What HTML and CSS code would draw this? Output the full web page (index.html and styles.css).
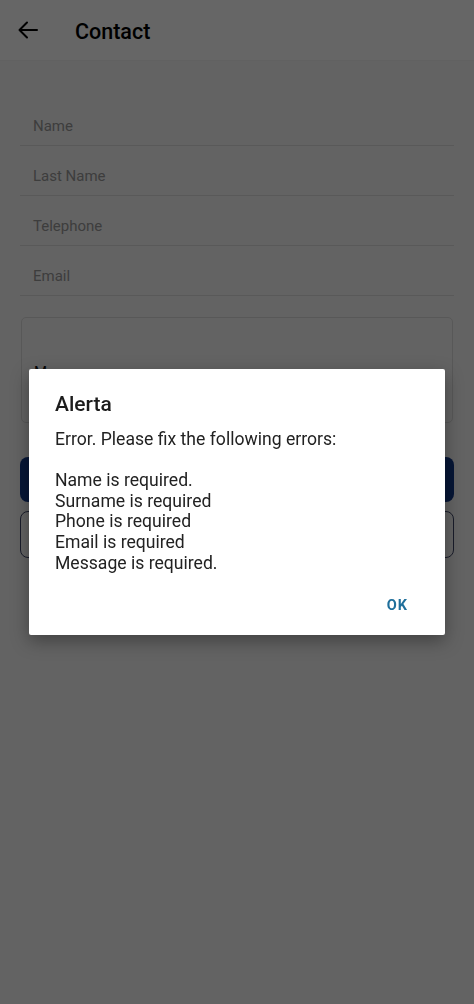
FILE: index.html
```html
<!DOCTYPE html>
<html lang="en">
<head>
<meta charset="utf-8">
<title>Contact</title>
<link rel="stylesheet" href="styles.css">
</head>
<body>
<div class="page">
  <header class="appbar">
    <svg class="back" width="24" height="24" viewBox="0 0 24 24" aria-hidden="true">
      <path d="M21 12H3.5M11 4.5L3.5 12L11 19.5" fill="none" stroke="#000" stroke-width="2" stroke-linecap="round" stroke-linejoin="round"/>
    </svg>
    <h1 class="title">Contact</h1>
  </header>
  <form class="form">
    <div class="field"><span class="label">Name</span></div>
    <div class="field"><span class="label">Last Name</span></div>
    <div class="field"><span class="label">Telephone</span></div>
    <div class="field"><span class="label">Email</span></div>
    <div class="textarea"><span class="label">Message</span></div>
    <div class="btn btn-primary">Send</div>
    <div class="btn btn-outline">Cancel</div>
  </form>
</div>
<div class="overlay"></div>
<div class="dialog" role="alertdialog">
  <h2 class="dialog-title">Alerta</h2>
  <div class="dialog-body">
    <p>Error. Please fix the following errors:</p>
    <p class="blank">&nbsp;</p>
    <p>Name is required.</p>
    <p>Surname is required</p>
    <p>Phone is required</p>
    <p>Email is required</p>
    <p>Message is required.</p>
  </div>
  <div class="dialog-actions"><span class="ok">OK</span></div>
</div>
</body>
</html>
```
FILE: styles.css
```css
* { box-sizing: border-box; }
html, body {
  margin: 0;
  padding: 0;
  height: 100%;
}
body {
  font-family: Roboto, "Liberation Sans", sans-serif;
  background: #f7f7f7;
  color: #212121;
  overflow: hidden;
}
.page {
  min-height: 1004px;
}
.appbar {
  height: 61px;
  background: #ffffff;
  border-bottom: 1px solid #f2f2f2;
  display: flex;
  align-items: center;
  padding-left: 16px;
}
.back {
  display: block;
  width: 24px;
  height: 24px;
}
.title {
  margin: 2px 0 0 35px;
  font-size: 21.5px;
  font-weight: 500;
  color: #000;
}
.form {
  padding: 35px 20px 0 20px;
  display: flex;
  flex-direction: column;
}
.field {
  height: 50px;
  border-bottom: 1px solid #dedede;
  display: flex;
  align-items: flex-end;
  padding: 0 0 10px 13px;
}
.label {
  font-size: 15px;
  line-height: 18px;
  color: #9a9a9a;
}
.textarea {
  margin: 21px 1px 0 1px;
  height: 106px;
  border: 1px solid #dddddd;
  border-radius: 5px;
  padding: 44px 0 0 12px;
}
.textarea .label {
  color: #111;
}
.btn {
  height: 45px;
  border-radius: 8px;
  display: flex;
  align-items: center;
  justify-content: center;
  font-size: 15px;
  font-weight: 500;
}
.btn-primary {
  margin-top: 34px;
  background: #113788;
  color: #fff;
}
.btn-outline {
  margin-top: 9px;
  height: 47px;
  border: 1px solid #40486a;
  color: #113788;
}
.overlay {
  position: fixed;
  inset: 0;
  background: rgba(0, 0, 0, 0.6);
}
.dialog {
  position: absolute;
  left: 29px;
  top: 369px;
  width: 416px;
  height: 266px;
  background: #ffffff;
  border-radius: 2px;
  box-shadow: 0 6px 18px rgba(0, 0, 0, 0.35);
  padding: 22px 26px 0 26px;
}
.dialog-title {
  margin: 0;
  font-size: 21px;
  line-height: 26px;
  font-weight: 500;
  color: #1c1c1c;
}
.dialog-body {
  margin-top: 12px;
}
.dialog-body p {
  margin: 0;
  font-size: 17.6px;
  line-height: 20.6px;
  color: #222;
}
.dialog-actions {
  display: flex;
  justify-content: flex-end;
  margin-top: 23px;
  padding-right: 11px;
}
.ok {
  font-size: 14.5px;
  font-weight: 700;
  letter-spacing: 1px;
  color: #1f6f9b;
  line-height: 20px;
}
```
